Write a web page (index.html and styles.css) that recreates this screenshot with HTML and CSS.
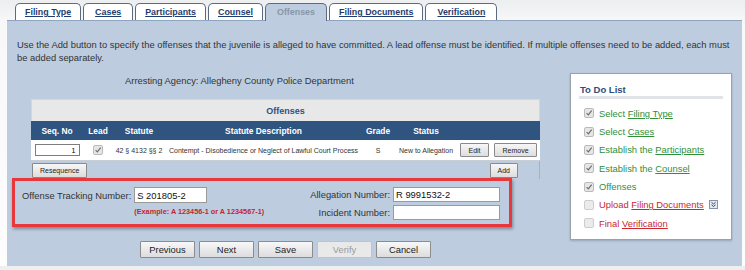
FILE: index.html
```html
<!DOCTYPE html>
<html lang="en">
<head>
  <meta charset="UTF-8" />
  <title>Offenses</title>
  <link rel="stylesheet" href="styles.css">
</head>
<body>
  <div class="page">
    <ul class="tabs">
      <li><a href="#">Filing Type</a></li>
      <li class="tab-short"><a href="#">Cases</a></li>
      <li><a href="#">Participants</a></li>
      <li><a href="#">Counsel</a></li>
      <li class="active"><span>Offenses</span></li>
      <li><a href="#">Filing Documents</a></li>
      <li class="tab-wide"><a href="#">Verification</a></li>
    </ul>
    <div class="panel">
      <p class="intro">
        Use the Add button to specify the offenses that the juvenile is alleged to have committed. A lead offense must be identified. If multiple offenses need to be added, each must be added separately.
      </p>
      <div class="content">
        <div class="main">
          <p class="agency">Arresting Agency: Allegheny County Police Department</p>

          <div class="offenses">
            <div class="offenses-title">Offenses</div>
            <table>
              <colgroup>
                <col style="width: 52px" />
                <col style="width: 30px" />
                <col style="width: 52px" />
                <col style="width: 197px" />
                <col style="width: 32px" />
                <col style="width: 64px" />
                <col style="width: 33px" />
                <col style="width: 49px" />
              </colgroup>
              <thead>
                <tr>
                  <th>Seq. No</th>
                  <th>Lead</th>
                  <th>Statute</th>
                  <th>Statute Description</th>
                  <th>Grade</th>
                  <th>Status</th>
                  <th></th>
                  <th></th>
                </tr>
              </thead>
              <tbody>
                <tr>
                  <td><input class="seq" type="text" value="1" /></td>
                  <td><span class="check done"><svg viewBox="0 0 10 10" width="10" height="10"><path d="M2 5.2 L4.2 7.4 L8.3 2" fill="none" stroke="#6a6a6a" stroke-width="1.4"/></svg></span></td>
                  <td>42 § 4132 §§ 2</td>
                  <td>Contempt - Disobedience or Neglect of Lawful Court Process</td>
                  <td>S</td>
                  <td>New to Allegation</td>
                  <td><button class="btn-sm">Edit</button></td>
                  <td><button class="btn-sm">Remove</button></td>
                </tr>
              </tbody>
            </table>
            <div class="offenses-actions">
              <button class="btn-sm">Resequence</button>
              <button class="btn-sm">Add</button>
            </div>
          </div>

          <div class="numbers">
            <div class="numbers-left">
              <label for="otn">Offense Tracking Number:</label>
              <input id="otn" type="text" value="S 201805-2" />
              <span class="example">(Example: A 123456-1 or A 1234567-1)</span>
            </div>
            <div class="numbers-right">
              <label for="alleg">Allegation Number:</label>
              <input id="alleg" type="text" value="R 9991532-2" />
              <label for="incident">Incident Number:</label>
              <input id="incident" type="text" value="" />
            </div>
          </div>

          <div class="nav-buttons">
            <button class="btn">Previous</button>
            <button class="btn">Next</button>
            <button class="btn">Save</button>
            <button class="btn" disabled>Verify</button>
            <button class="btn">Cancel</button>
          </div>
        </div>

        <aside class="todo">
          <h3>To Do List</h3>
          <ul>
            <li class="ok"><span class="check done"><svg viewBox="0 0 10 10" width="10" height="10"><path d="M2 5.2 L4.2 7.4 L8.3 2" fill="none" stroke="#6a6a6a" stroke-width="1.4"/></svg></span>Select&nbsp;<a href="#">Filing Type</a></li>
            <li class="ok"><span class="check done"><svg viewBox="0 0 10 10" width="10" height="10"><path d="M2 5.2 L4.2 7.4 L8.3 2" fill="none" stroke="#6a6a6a" stroke-width="1.4"/></svg></span>Select&nbsp;<a href="#">Cases</a></li>
            <li class="ok"><span class="check done"><svg viewBox="0 0 10 10" width="10" height="10"><path d="M2 5.2 L4.2 7.4 L8.3 2" fill="none" stroke="#6a6a6a" stroke-width="1.4"/></svg></span>Establish the&nbsp;<a href="#">Participants</a></li>
            <li class="ok"><span class="check done"><svg viewBox="0 0 10 10" width="10" height="10"><path d="M2 5.2 L4.2 7.4 L8.3 2" fill="none" stroke="#6a6a6a" stroke-width="1.4"/></svg></span>Establish the&nbsp;<a href="#">Counsel</a></li>
            <li class="ok"><span class="check done"><svg viewBox="0 0 10 10" width="10" height="10"><path d="M2 5.2 L4.2 7.4 L8.3 2" fill="none" stroke="#6a6a6a" stroke-width="1.4"/></svg></span>Offenses</li>
            <li class="todo-item"><span class="check"></span>Upload&nbsp;<a href="#">Filing Documents</a>
              <svg class="expand" viewBox="0 0 9 9" width="9" height="9"><rect x="0.5" y="0.5" width="8" height="8" fill="#e4eaf2" stroke="#8293ab"/><path d="M2.5 2.3 L4.5 4 L6.5 2.3 M2.5 4.8 L4.5 6.5 L6.5 4.8" fill="none" stroke="#33465f" stroke-width="1"/></svg>
            </li>
            <li class="todo-item"><span class="check"></span>Final&nbsp;<a href="#">Verification</a></li>
          </ul>
        </aside>
      </div>
    </div>
  </div>
</body>
</html>
```

FILE: styles.css
```css
body {
  margin: 0;
  font-family: "Liberation Sans", Arial, sans-serif;
  font-size: 9.4px;
  color: #333;
  background: linear-gradient(to bottom, #eceeef, #f8f8f8 22px, #fdfdfd);
}

.page {
  padding: 3px 0 0 7px;
  width: 735px;
}

/* Tabs */
.tabs {
  list-style: none;
  margin: 0 0 0 8px;
  padding: 0;
  display: flex;
  align-items: flex-start;
  gap: 2px;
  height: 17px;
  position: relative;
  z-index: 1;
}

.tabs li {
  box-sizing: border-box;
  height: 17px;
  padding: 0 9px;
  border: 1px solid #5a6c83;
  border-bottom: none;
  border-radius: 5px 5px 0 0;
  background: #fff;
  line-height: 16px;
  font-size: 8.9px;
  font-weight: bold;
  text-align: center;
}

.tabs li.tab-short {
  min-width: 50px;
}

.tabs li.tab-wide {
  padding: 0 11px;
}

.tabs a {
  color: #1f3d6d;
}

.tabs li.active {
  height: 18px;
  background: #bdcddf;
  color: #8795a7;
  padding: 0 11px;
}

/* Main panel */
.panel {
  box-sizing: border-box;
  height: 246px;
  padding: 17px 10px 0;
  background: #bdcddf;
  border-top: 1px solid #8ea4bf;
}

.intro {
  margin: 0 -3px 0 0;
  line-height: 13px;
}

.content {
  display: flex;
  align-items: flex-start;
}

.main {
  flex: 1;
}

.agency {
  margin: 10px 0 0 108px;
  line-height: 13px;
}

/* Offenses table */
.offenses {
  margin: 12px 0 0 14px;
  width: 509px;
}

.offenses-title {
  height: 22px;
  line-height: 22px;
  background: #e8e8e8;
  border: 1px solid #d3d7dc;
  border-bottom: none;
  box-sizing: border-box;
  text-align: center;
  font-weight: bold;
  font-size: 9px;
  color: #2e5283;
}

.offenses table {
  width: 100%;
  border-collapse: collapse;
  table-layout: fixed;
}

.offenses th {
  height: 19px;
  padding: 0;
  background: #2f5480;
  color: #fff;
  font-size: 8.4px;
  font-weight: bold;
}

.offenses td {
  height: 20px;
  padding: 0;
  background: #fff;
  text-align: center;
  font-size: 7px;
  color: #333;
  border-bottom: 1px solid #c9ced5;
}

.seq {
  box-sizing: border-box;
  width: 45px;
  height: 12px;
  padding: 0 3px;
  border: 1px solid #7d7d7d;
  font-family: inherit;
  font-size: 7px;
  text-align: right;
}

.offenses-actions {
  display: flex;
  justify-content: space-between;
  align-items: center;
  height: 18px;
  padding: 0 21px 0 1px;
  border-right: 1px solid #a7b2c0;
}

.btn-sm {
  height: 15px;
  padding: 0 7px;
  border: 1px solid #8a8a8a;
  border-radius: 1px;
  background: linear-gradient(#f7f7f7, #dddddd);
  font-family: inherit;
  font-size: 7px;
  color: #222;
}

.offenses td .btn-sm {
  height: 14px;
}

.check {
  display: inline-flex;
  box-sizing: border-box;
  width: 10px;
  height: 10px;
  border: 1px solid #bababa;
  border-radius: 2px;
  background: #e6e6e6;
  vertical-align: middle;
  align-items: center;
  justify-content: center;
  flex: none;
}

.check svg {
  width: 8px;
  height: 8px;
}

/* Tracking numbers */
.numbers {
  display: flex;
  box-sizing: border-box;
  width: 500px;
  height: 49px;
  margin: -1px 0 0 -5px;
  padding: 6px 9px 0 7px;
  border: 3px solid #e8383b;
  box-shadow: 1px 2px 3px rgba(0, 0, 0, 0.35);
  position: relative;
}

.numbers-left {
  display: grid;
  grid-template-columns: auto 73px;
  column-gap: 3px;
  align-items: center;
  align-self: flex-start;
}

.numbers-right {
  margin-left: auto;
  display: grid;
  grid-template-columns: auto 107px;
  column-gap: 3px;
  row-gap: 3px;
  align-items: center;
  align-self: flex-start;
}

.numbers-right label {
  text-align: right;
}

.numbers input {
  box-sizing: border-box;
  height: 15px;
  padding: 0 2px;
  border: 1px solid #9a9a9a;
  font-family: inherit;
  font-size: 9.4px;
  color: #111;
}

.numbers-left input {
  height: 16px;
}

.example {
  grid-column: 2;
  white-space: nowrap;
  margin-top: 4px;
  line-height: 10px;
  font-size: 7.3px;
  font-weight: bold;
  color: #c2262c;
}

/* Navigation buttons */
.nav-buttons {
  display: flex;
  gap: 4px;
  margin: 14px 0 0 123px;
}

.btn {
  width: 55px;
  height: 17px;
  padding: 0;
  border: 1px solid #8c8c8c;
  border-radius: 1px;
  background: linear-gradient(#f8f8f8, #dcdcdc);
  font-family: inherit;
  font-size: 9.4px;
  color: #222;
}

.btn:disabled {
  border-color: #c3c3c3;
  background: #e9e9e9;
  color: #9a9a9a;
}

/* To Do list */
.todo {
  box-sizing: border-box;
  width: 162px;
  height: 167px;
  margin-top: 9px;
  padding: 9px 8px 0;
  background: #fff;
  border: 1px solid #9aa3ad;
  box-shadow: 0 1px 2px rgba(0, 0, 0, 0.2);
}

.todo h3 {
  margin: 0;
  padding-left: 1px;
  line-height: 13px;
  font-size: 9.5px;
  color: #2d4d7c;
  border-bottom: 3px solid #e0e3e7;
}

.todo ul {
  list-style: none;
  margin: 5px 0 0;
  padding: 0 0 0 5px;
}

.todo li {
  display: flex;
  align-items: center;
  height: 18.35px;
  white-space: nowrap;
}

.todo li .check {
  margin-right: 5px;
}

.todo li.ok,
.todo li.ok a {
  color: #2f8f3a;
}

.todo li.todo-item,
.todo li.todo-item a {
  color: #c8282e;
}

.todo li .check:not(.done) {
  background: #ebebeb;
  border-color: #cdcdcd;
}

.expand {
  margin-left: 5px;
  flex: none;
}
```
